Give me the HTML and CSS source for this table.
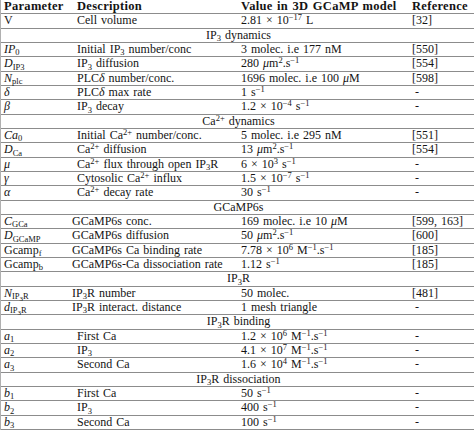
FILE: index.html
```html
<!DOCTYPE html>
<html>
<head>
<meta charset="utf-8">
<link rel="stylesheet" href="styles.css">
</head>
<body>
<div class="tbl">
  <div class="row head"><div>Parameter</div><div>Description</div><div>Value in 3D GCaMP model</div><div>Reference</div></div>
  <div class="row"><div>V</div><div>Cell volume</div><div>2.81 × 10<sup>−17</sup> L</div><div>[32]</div></div>
  <div class="row sec">IP<sub>3</sub> dynamics</div>
  <div class="row"><div><i>IP</i><sub>0</sub></div><div>Initial IP<sub>3</sub> number/conc</div><div>3 molec. i.e 177 nM</div><div>[550]</div></div>
  <div class="row"><div><i>D</i><sub>IP3</sub></div><div>IP<sub>3</sub> diffusion</div><div>280 <i>μ</i>m<sup>2</sup>.s<sup>−1</sup></div><div>[554]</div></div>
  <div class="row"><div><i>N</i><sub>plc</sub></div><div>PLC<i>δ</i> number/conc.</div><div>1696 molec. i.e 100 <i>μ</i>M</div><div>[598]</div></div>
  <div class="row"><div><i>δ</i></div><div>PLC<i>δ</i> max rate</div><div>1 s<sup>−1</sup></div><div class="dash">-</div></div>
  <div class="row"><div><i>β</i></div><div>IP<sub>3</sub> decay</div><div>1.2 × 10<sup>−4</sup> s<sup>−1</sup></div><div class="dash">-</div></div>
  <div class="row sec">Ca<sup>2+</sup> dynamics</div>
  <div class="row"><div><i>Ca</i><sub>0</sub></div><div>Initial Ca<sup>2+</sup> number/conc.</div><div>5 molec. i.e 295 nM</div><div>[551]</div></div>
  <div class="row"><div><i>D</i><sub>Ca</sub></div><div>Ca<sup>2+</sup> diffusion</div><div>13 <i>μ</i>m<sup>2</sup>.s<sup>−1</sup></div><div>[554]</div></div>
  <div class="row"><div><i>μ</i></div><div>Ca<sup>2+</sup> flux through open IP<sub>3</sub>R</div><div>6 × 10<sup>3</sup> s<sup>−1</sup></div><div class="dash">-</div></div>
  <div class="row"><div><i>γ</i></div><div>Cytosolic Ca<sup>2+</sup> influx</div><div>1.5 × 10<sup>−7</sup> s<sup>−1</sup></div><div class="dash">-</div></div>
  <div class="row"><div><i>α</i></div><div>Ca<sup>2+</sup> decay rate</div><div>30 s<sup>−1</sup></div><div class="dash">-</div></div>
  <div class="row sec">GCaMP6s</div>
  <div class="row tight"><div><i>C</i><sub>GCa</sub></div><div>GCaMP6s conc.</div><div>169 molec. i.e 10 <i>μ</i>M</div><div>[599, 163]</div></div>
  <div class="row tight"><div><i>D</i><sub>GCaMP</sub></div><div>GCaMP6s diffusion</div><div>50 <i>μ</i>m<sup>2</sup>.s<sup>−1</sup></div><div>[600]</div></div>
  <div class="row tight"><div>Gcamp<sub>f</sub></div><div>GCaMP6s Ca binding rate</div><div>7.78 × 10<sup>6</sup> M<sup>−1</sup>.s<sup>−1</sup></div><div>[185]</div></div>
  <div class="row tight"><div>Gcamp<sub>b</sub></div><div>GCaMP6s-Ca dissociation rate</div><div>1.12 s<sup>−1</sup></div><div>[185]</div></div>
  <div class="row sec">IP<sub>3</sub>R</div>
  <div class="row tight"><div><i>N</i><sub>IP<sub>3</sub>R</sub></div><div>IP<sub>3</sub>R number</div><div>50 molec.</div><div>[481]</div></div>
  <div class="row tight"><div><i>d</i><sub>IP<sub>3</sub>R</sub></div><div>IP<sub>3</sub>R interact. distance</div><div>1 mesh triangle</div><div class="dash">-</div></div>
  <div class="row sec">IP<sub>3</sub>R binding</div>
  <div class="row"><div><i>a</i><sub>1</sub></div><div>First Ca</div><div>1.2 × 10<sup>6</sup> M<sup>−1</sup>.s<sup>−1</sup></div><div class="dash">-</div></div>
  <div class="row"><div><i>a</i><sub>2</sub></div><div>IP<sub>3</sub></div><div>4.1 × 10<sup>7</sup> M<sup>−1</sup>.s<sup>−1</sup></div><div class="dash">-</div></div>
  <div class="row"><div><i>a</i><sub>3</sub></div><div>Second Ca</div><div>1.6 × 10<sup>4</sup> M<sup>−1</sup>.s<sup>−1</sup></div><div class="dash">-</div></div>
  <div class="row sec">IP<sub>3</sub>R dissociation</div>
  <div class="row"><div><i>b</i><sub>1</sub></div><div>First Ca</div><div>50 s<sup>−1</sup></div><div class="dash">-</div></div>
  <div class="row"><div><i>b</i><sub>2</sub></div><div>IP<sub>3</sub></div><div>400 s<sup>−1</sup></div><div class="dash">-</div></div>
  <div class="row"><div><i>b</i><sub>3</sub></div><div>Second Ca</div><div>100 s<sup>−1</sup></div><div class="dash">-</div></div>
</div>
</body>
</html>
```
FILE: styles.css
```css
html, body {
  margin: 0;
  padding: 0;
  background: #ffffff;
}

.tbl {
  width: 474px;
  box-sizing: border-box;
  border-left: 1px solid #b0b0b0;
  font-family: "Liberation Serif", "Times New Roman", serif;
  font-size: 12px;
  color: #141414;
}

.row {
  display: grid;
  grid-template-columns: 76px 164px 171px 1fr;
  height: 14.33px;
  line-height: 13.33px;
  box-sizing: border-box;
  border-bottom: 1px solid #8c8c8c;
  white-space: nowrap;
  word-spacing: 1px;
}

.row > div:first-child {
  padding-left: 3px;
}

.row.tight {
  grid-template-columns: 71px 169px 171px 1fr;
}

.head {
  font-weight: bold;
  font-size: 12.5px;
  letter-spacing: 0.3px;
  word-spacing: 1px;
}

.sec {
  display: block;
  text-align: center;
  padding-left: 2px;
}

.dash {
  padding-left: 3px;
}

sub, sup {
  font-size: 8.5px;
  line-height: 0;
  position: relative;
  vertical-align: baseline;
  word-spacing: 0;
}

sup {
  top: -4px;
}

sub {
  top: 2.5px;
}

sub sub {
  font-size: 7px;
  top: 1.5px;
}
```
